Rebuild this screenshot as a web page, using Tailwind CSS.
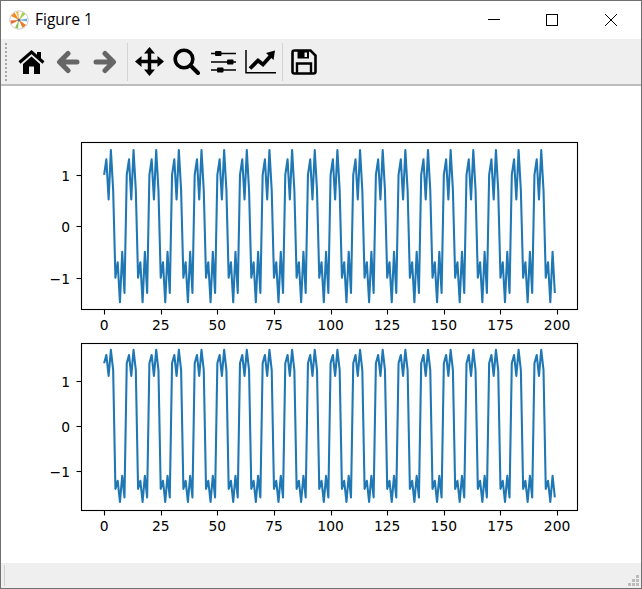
<!DOCTYPE html>
<html lang="en">
<head>
    <meta charset="UTF-8">
    <title>Figure 1</title>
    <script src="https://cdn.jsdelivr.net/npm/@tailwindcss/browser@4"></script>
</head>
<body class="bg-white">
    <div class="w-[642px] h-[589px] flex flex-col border border-[#707070] overflow-hidden font-['Open_Sans',sans-serif]">
        <!-- Title bar -->
        <div class="h-[38px] flex items-center bg-white shrink-0">
            <svg class="ml-[8px] w-5 h-5" viewBox="0 0 20 20">
                <circle cx="10" cy="10" r="9.2" fill="#fff" stroke="#c8c8c8" stroke-width="1"/>
                <path d="M10 10 L2 6 L5.5 2.5 Z" fill="#f08a24"/>
                <path d="M10 10 L17 15 L13.5 18 Z" fill="#ee7a22"/>
                <path d="M10 10 L16.5 4 L13.5 2 Z" fill="#a6cf4a"/>
                <path d="M10 10 L9.5 1.5 L7 2 Z" fill="#efb54a"/>
                <path d="M10 10 L1.5 10.5 L2.5 14 Z" fill="#e8642a"/>
                <path d="M10 10 L6 17.5 L9 18.5 Z" fill="#8cc152"/>
                <path d="M10 10 L18 8.5 L18 11.5 Z" fill="#6fb0d8"/>
                <circle cx="10" cy="10" r="1.5" fill="#667"/>
            </svg>
            <span class="ml-[6px] text-[15.5px] text-black leading-none">Figure 1</span>
            <div class="ml-auto flex">
                <div class="w-[58px] h-[38px] flex items-center justify-center">
                    <svg class="w-3 h-3" viewBox="0 0 12 12"><path d="M0 5.5H12" stroke="#000" stroke-width="1"/></svg>
                </div>
                <div class="w-[58px] h-[38px] flex items-center justify-center">
                    <div class="w-3 h-3 border border-black"></div>
                </div>
                <div class="w-[60px] h-[38px] flex items-center justify-center">
                    <svg class="w-3 h-3" viewBox="0 0 12 12"><path d="M0 0L12 12M12 0L0 12" stroke="#000" stroke-width="1"/></svg>
                </div>
            </div>
        </div>

        <!-- Toolbar -->
        <div class="h-[47px] bg-[#efefef] border-b-2 border-[#bdbdbd] flex items-center shrink-0">
            <div class="ml-[4px] w-[2px] h-[38px] border-l-2 border-dotted border-[#a8a8a8]"></div>
            <div class="ml-[6px] flex gap-px">
                <button class="w-9 h-9 flex items-center justify-center">
                    <svg width="27" height="24" viewBox="0 0 27 24"><path d="M1.5 12.5L13.5 2L25.5 12.5" fill="none" stroke="#000" stroke-width="3"/><path d="M5 14L13.5 6.5L22 14V24H16V16.5H11V24H5Z" fill="#000"/><path d="M19 2H23V9L19 6Z" fill="#000"/></svg>
                </button>
                <button class="w-9 h-9 flex items-center justify-center">
                    <svg width="24" height="24" viewBox="0 0 24 24"><path d="M21 12H5M12 3.5L3.5 12L12 20.5" fill="none" stroke="#666" stroke-width="5" stroke-linecap="round" stroke-linejoin="round"/></svg>
                </button>
                <button class="w-9 h-9 flex items-center justify-center">
                    <svg width="24" height="24" viewBox="0 0 24 24"><path d="M3 12H19M12 3.5L20.5 12L12 20.5" fill="none" stroke="#666" stroke-width="5" stroke-linecap="round" stroke-linejoin="round"/></svg>
                </button>
            </div>
            <div class="ml-1 mr-[3px] w-px h-[38px] bg-[#d4d4d4]"></div>
            <div class="flex gap-px">
                <button class="w-9 h-9 flex items-center justify-center">
                    <svg width="29" height="29" viewBox="0 0 29 29"><path d="M14.5 4V25M4 14.5H25" stroke="#000" stroke-width="3.4"/><path d="M14.5 0L20 6.5H9ZM14.5 29L20 22.5H9ZM0 14.5L6.5 9V20ZM29 14.5L22.5 9V20Z" fill="#000"/></svg>
                </button>
                <button class="w-9 h-9 flex items-center justify-center">
                    <svg width="27" height="27" viewBox="0 0 27 27"><circle cx="11" cy="11" r="8.8" fill="none" stroke="#000" stroke-width="3.6"/><path d="M17.5 17.5L25 25" stroke="#000" stroke-width="4" stroke-linecap="round"/></svg>
                </button>
                <button class="w-9 h-9 flex items-center justify-center">
                    <svg width="25" height="24" viewBox="0 0 25 24"><path d="M0 3.5H25M0 12H25M0 20H25" stroke="#000" stroke-width="1.5"/><rect x="4" y="1" width="6.5" height="5" rx="1" fill="#000"/><rect x="16" y="9.5" width="6.5" height="5" rx="1" fill="#000"/><rect x="6" y="17.5" width="6.5" height="5" rx="1" fill="#000"/></svg>
                </button>
                <button class="w-9 h-9 flex items-center justify-center">
                    <svg width="31" height="24" viewBox="0 0 31 24"><path d="M1 0V22.8H31" fill="none" stroke="#000" stroke-width="1.5"/><path d="M5 18.5L13 10.5L18 14.5L26 5.5" fill="none" stroke="#000" stroke-width="3.8"/><path d="M21 3L30 0.5L28.5 10Z" fill="#000"/></svg>
                </button>
            </div>
            <div class="ml-1 mr-[3px] w-px h-[38px] bg-[#d4d4d4]"></div>
            <button class="w-9 h-9 flex items-center justify-center">
                <svg width="26" height="26" viewBox="0 0 26 26"><path d="M3.5 1.5H19.5L24.5 6.5V22.5Q24.5 24.5 22.5 24.5H3.5Q1.5 24.5 1.5 22.5V3.5Q1.5 1.5 3.5 1.5Z" fill="none" stroke="#000" stroke-width="2.6"/><path d="M6.5 2H18V9.5H6.5Z" fill="#000"/><path d="M13.5 3.5H16V8H13.5Z" fill="#efefef"/><path d="M6 24V14.5H20V24" fill="none" stroke="#000" stroke-width="2.4"/></svg>
            </button>
        </div>

        <!-- Figure canvas -->
        <svg id="figure" class="w-[640px] h-[477px] shrink-0" viewBox="1 86 640 477" font-family="'DejaVu Sans', sans-serif" font-size="13.89" fill="#000"></svg>

        <!-- Status bar -->
        <div class="flex-1 bg-[#efefef] flex items-center relative">
            <div class="ml-[3px] w-px h-[21px] bg-[#cfcfcf]"></div>
            <div class="absolute right-[2px] bottom-[2px] grid grid-cols-3 gap-px">
                <span></span><span></span><span class="w-[3px] h-[3px] bg-[#bcbcbc]"></span>
                <span></span><span class="w-[3px] h-[3px] bg-[#bcbcbc]"></span><span class="w-[3px] h-[3px] bg-[#bcbcbc]"></span>
                <span class="w-[3px] h-[3px] bg-[#bcbcbc]"></span><span class="w-[3px] h-[3px] bg-[#bcbcbc]"></span><span class="w-[3px] h-[3px] bg-[#bcbcbc]"></span>
            </div>
        </div>
    </div>

    <script>
        // one period of each signal, read off the plots
        var axesList = [
            { top: 142.5, bottom: 309.5, zero: 226.2, unit: 51.4, wave: [1, 1.3, .52, 1.48, .7, -1, -.7, -1.48, -.5, -1.3] },
            { top: 343.5, bottom: 510.5, zero: 426.3, unit: 45, wave: [1.4, 1.585, 1.12, 1.7, 1.25, -1.39, -1.21, -1.68, -1.1, -1.58] }
        ];
        var left = 81.5, right = 577.5;
        var xAt = function (t) { return 104.1 + 2.265 * t; };
        var svg = '';

        axesList.forEach(function (ax) {
            var pts = [];
            for (var t = 0; t < 200; t++) {
                pts.push(xAt(t).toFixed(2) + ',' + (ax.zero - ax.unit * ax.wave[t % 10]).toFixed(2));
            }
            svg += '<polyline points="' + pts.join(' ') + '" fill="none" stroke="#1f77b4" stroke-width="2.08" stroke-linejoin="round"/>';
            svg += '<rect x="' + left + '" y="' + ax.top + '" width="' + (right - left) + '" height="' + (ax.bottom - ax.top) + '" fill="none" stroke="#000" stroke-width="1.1"/>';

            for (var v = 0; v <= 200; v += 25) {
                var x = Math.round(xAt(v)) + .5;
                svg += '<path d="M' + x + ' ' + ax.bottom + 'v5" stroke="#000" stroke-width="1.1"/>';
                svg += '<text x="' + xAt(v) + '" y="' + (ax.bottom + 20) + '" text-anchor="middle">' + v + '</text>';
            }
            [1, 0, -1].forEach(function (n) {
                var y = Math.round(ax.zero - ax.unit * n) + .5;
                svg += '<path d="M' + (left - 5) + ' ' + y + 'h5" stroke="#000" stroke-width="1.1"/>';
                svg += '<text x="' + (left - 11.5) + '" y="' + (y + 5) + '" text-anchor="end">' + (n < 0 ? '\u2212' + (-n) : n) + '</text>';
            });
        });
        document.getElementById('figure').innerHTML = svg;
    </script>
</body>
</html>
